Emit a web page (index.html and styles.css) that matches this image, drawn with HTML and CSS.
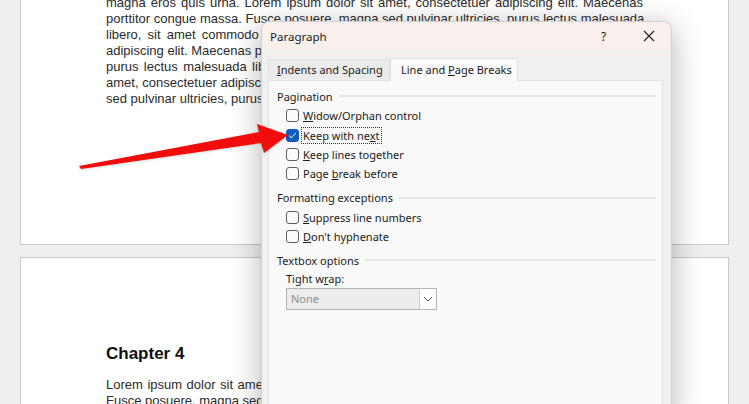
FILE: index.html
```html
<!DOCTYPE html>
<html lang="en">
<head>
    <meta charset="UTF-8">
    <meta name="viewport" content="width=device-width, initial-scale=1.0">
    <title>Paragraph - Line and Page Breaks</title>
    <link rel="stylesheet" href="styles.css">
</head>
<body>
    <!-- Document pages behind the dialog -->
    <div class="viewer">
        <div class="page page-first">
            <div class="body-text">
                <div class="line">magna eros quis urna. Lorem ipsum dolor sit amet, consectetuer adipiscing elit. Maecenas</div>
                <div class="line">porttitor congue massa. Fusce posuere, magna sed pulvinar ultricies, purus lectus malesuada</div>
                <div class="line">libero, sit amet commodo magna eros quis urna. Nunc viverra imperdiet enim. Lorem sit</div>
                <div class="line">adipiscing elit. Maecenas porttitor congue massa. Fusce posuere, magna sed pulvinar ultricies,</div>
                <div class="line">purus lectus malesuada libero, sit amet commodo magna eros quis urna. Lorem ipsum sit</div>
                <div class="line">amet, consectetuer adipiscing elit. Maecenas porttitor congue massa. Fusce posuere, magna</div>
                <div class="line last">sed pulvinar ultricies, purus lectus malesuada libero.</div>
            </div>
        </div>

        <div class="page">
            <h2 class="chapter">Chapter 4</h2>
            <div class="body-text">
                <div class="line">Lorem ipsum dolor sit amet, consectetuer adipiscing elit. Maecenas porttitor congue massa.</div>
                <div class="line">Fusce posuere, magna sed pulvinar ultricies, purus lectus malesuada libero, sit amet commodo</div>
            </div>
        </div>
    </div>

    <!-- Paragraph dialog -->
    <div class="dialog">
        <div class="dialog-title">
            <span class="dialog-name">Paragraph</span>
            <span class="title-btn help">?</span>
            <span class="title-btn">
                <svg width="12" height="12" viewBox="0 0 12 12"><path d="M1 1L11 11M11 1L1 11" stroke="#1b1b1b" stroke-width="1.1" fill="none"/></svg>
            </span>
        </div>

        <div class="tabs">
            <div class="tab"><u>I</u>ndents and Spacing</div>
            <div class="tab active">Line and <u>P</u>age Breaks</div>
        </div>

        <div class="panel">
            <div class="group-head">Pagination</div>
            <div class="check"><span class="box"></span><span><u>W</u>idow/Orphan control</span></div>
            <div class="check"><span class="box checked"><svg width="9" height="7" viewBox="0 0 9 7"><path d="M1 3.6L3.3 5.8L8 1" stroke="#fff" stroke-width="1" fill="none"/></svg></span><span class="focus">Keep with ne<u>x</u>t</span></div>
            <div class="check"><span class="box"></span><span><u>K</u>eep lines together</span></div>
            <div class="check"><span class="box"></span><span>Page <u>b</u>reak before</span></div>

            <div class="group-head spaced">Formatting exceptions</div>
            <div class="check"><span class="box"></span><span><u>S</u>uppress line numbers</span></div>
            <div class="check"><span class="box"></span><span><u>D</u>on't hyphenate</span></div>

            <div class="group-head spaced">Textbox options</div>
            <div class="field-label">Tight w<u>r</u>ap:</div>
            <div class="select">
                <span class="select-value">None</span>
                <span class="select-arrow">
                    <svg width="10" height="6" viewBox="0 0 10 6"><path d="M1 1L5 5L9 1" stroke="#555" stroke-width="1" fill="none"/></svg>
                </span>
            </div>
        </div>
    </div>

    <!-- Red callout arrow pointing at the checked option -->
    <svg class="callout" width="749" height="404" viewBox="0 0 749 404">
        <polygon points="79,166 259,132 257,124 288,135 264,153 261,143 81,169" fill="#f20d0d"/>
    </svg>
</body>
</html>
```

FILE: styles.css
```css
body { margin: 0; background: #efefef; overflow: hidden; height: 404px; position: relative; }

/* document pages */
.viewer { padding: 0 20px; }
.page { background: #fff; border: 1px solid #c9c9c9; padding: 85px 85px 0 85px; height: 200px; margin-bottom: 12px; overflow: hidden; }
.page-first { margin-top: -5px; border-top: none; padding-top: 0; height: 249px; }
.body-text { font-family: "Liberation Sans", Arial, sans-serif; font-size: 13px; line-height: 16px; color: #2b2b2b; }
.line { white-space: nowrap; text-align: justify; text-align-last: justify; }
.line.last { text-align-last: left; }
.chapter { font-family: "Liberation Sans", Arial, sans-serif; font-size: 17px; font-weight: bold; line-height: 22px; margin: 0 0 12px 0; color: #111; }

/* dialog */
.dialog { position: absolute; left: 261px; top: 21px; width: 411px; height: 400px; background: #f0f0f0; border: 1px solid #d0d0d0; border-radius: 8px 8px 0 0; box-shadow: 0 6px 30px rgba(0,0,0,0.3); font-family: "Noto Sans", sans-serif; font-size: 11px; color: #1b1b1b; box-sizing: border-box; }
.dialog-title { display: flex; align-items: center; height: 28px; background: #f9f0ed; border-radius: 8px 8px 0 0; padding-left: 8px; }
.dialog-name { flex: 1; font-size: 11.5px; }
.title-btn { width: 45px; display: flex; justify-content: center; align-items: center; }
.help { font-size: 12px; }

.tabs { display: flex; align-items: flex-end; height: 30px; padding-left: 6px; }
.tab { box-sizing: border-box; white-space: nowrap; height: 20px; line-height: 19px; padding: 0 8px; width: 122px; background: #ebebeb; border: 1px solid #e2e2e2; border-bottom: none; margin-bottom: 1px; }
.tab.active { height: 23px; line-height: 22px; width: 128px; padding: 0 10px; background: #f9f9f9; border-color: #e0e0e0; margin-bottom: -1px; position: relative; }

.panel { background: #f9f9f9; border: 1px solid #e2e2e2; margin: 0 8px 0 6px; height: 320px; padding: 5px 6px 0 8px; }
.group-head { display: flex; align-items: center; height: 20px; }
.group-head::after { content: ""; flex: 1; height: 2px; background: #e6e6e6; margin-left: 6px; }
.group-head.spaced { margin-top: 4px; }

.check { display: flex; align-items: center; height: 19.4px; padding-left: 9px; }
.box { width: 11px; height: 11px; border: 1px solid #5f5f5f; border-radius: 3px; background: #fbfbfb; margin-right: 4px; display: flex; align-items: center; justify-content: center; }
.box.checked { background: #0f5cba; border-color: #0f5cba; }
.focus { outline: 1px dotted #333; padding: 0 1px; margin-left: -1px; }

.field-label { padding-left: 9px; height: 18px; line-height: 17px; }
.select { display: flex; width: 149px; height: 20px; margin-left: 9px; background: #ececec; border: 1px solid #b5b5b5; }
.select-value { flex: 1; line-height: 20px; padding-left: 4px; color: #8c8c8c; }
.select-arrow { width: 16px; background: #fff; border-left: 1px solid #d0d0d0; display: flex; align-items: center; justify-content: center; }

/* callout arrow sits over the dialog */
.callout { position: absolute; left: 0; top: 0; pointer-events: none; filter: drop-shadow(0 1px 1px rgba(0,0,0,0.15)); }
```
